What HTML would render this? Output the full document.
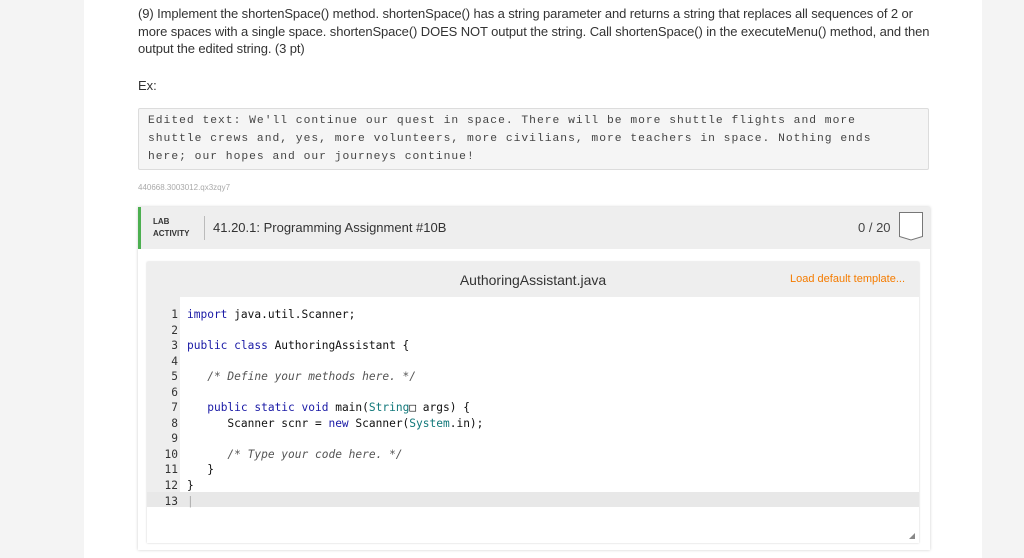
<!DOCTYPE html>
<html><head><style>
body{margin:0;width:1024px;height:558px;background:#f4f4f4;font-family:"Liberation Sans",sans-serif;overflow:hidden;position:relative}
.page{position:absolute;left:84px;top:0;width:898px;height:558px;background:#fff}
.p{position:absolute;left:138px;top:5px;width:795px;font-size:13px;line-height:17.5px;color:#333;letter-spacing:-0.1px}
.ex{position:absolute;left:138px;top:78px;font-size:13px;color:#333}
.pre{position:absolute;left:138px;top:108px;width:791px;height:62px;background:#f5f5f5;border:1px solid #dcdcdc;border-radius:2px;padding:0 0 0 9px;box-sizing:border-box;font-family:"Liberation Mono",monospace;font-size:11.3px;letter-spacing:1.0px;line-height:18px;color:#444;white-space:pre}
.pre div{padding-top:3px}
.id{position:absolute;left:138px;top:183px;font-size:8px;color:#aaa}
.lab{position:absolute;left:138px;top:207px;width:792px;height:343px;background:#fff;box-shadow:0 0 3px rgba(0,0,0,.2)}
.hdr{position:absolute;left:0;top:0;width:792px;height:42px;background:#eee;border-left:3px solid #4caf50;box-sizing:border-box}
.la{position:absolute;left:12px;top:9px;font-size:8px;font-weight:bold;color:#333;line-height:12px}
.sep{position:absolute;left:63px;top:9px;width:1px;height:24px;background:#bbb}
.tt{position:absolute;left:72px;top:13px;font-size:13px;color:#333}
.sc{position:absolute;left:717px;top:13px;font-size:13px;color:#444}
.ed{position:absolute;left:9px;top:55px;width:772px;height:281px;background:#fff;box-shadow:0 0 2px rgba(0,0,0,.2)}
.eh{position:absolute;left:0;top:0;width:772px;height:35px;background:#eee}
.fn{position:absolute;left:0;width:772px;top:10px;text-align:center;font-size:14px;color:#333}
.ld{position:absolute;right:14px;top:11px;font-size:11px;color:#f57c00}
.gut{position:absolute;left:0;top:35px;width:33px;height:210px;background:#eee}
.hl{position:absolute;left:0;top:230px;width:772px;height:15px;background:#e8e8e8}
.code{position:absolute;left:0;top:45px;font-family:"DejaVu Sans Mono",monospace;font-size:11.2px;line-height:15.55px;color:#111;white-space:pre}
.ln{display:inline-block;width:31px;text-align:right;color:#333;margin-right:9px}
.k{color:#1a1aa6}.t{color:#11787a}.c{color:#555;font-style:italic}
</style></head><body>
<div class="page"></div>
<div class="p">(9) Implement the shortenSpace() method. shortenSpace() has a string parameter and returns a string that replaces all sequences of 2 or more spaces with a single space. shortenSpace() DOES NOT output the string. Call shortenSpace() in the executeMenu() method, and then output the edited string. (3 pt)</div>
<div class="ex">Ex:</div>
<div class="pre"><div>Edited text: We'll continue our quest in space. There will be more shuttle flights and more
shuttle crews and, yes, more volunteers, more civilians, more teachers in space. Nothing ends
here; our hopes and our journeys continue!</div></div>
<div class="id">440668.3003012.qx3zqy7</div>
<div class="lab">
<div class="hdr"><div class="la">LAB<br>ACTIVITY</div><div class="sep"></div><div class="tt">41.20.1: Programming Assignment #10B</div><div class="sc">0 / 20</div>
<svg style="position:absolute;left:757px;top:4px" width="28" height="32"><path d="M1.5 1.5H24.5V25.5L13 29L1.5 25.5Z" fill="#fff" stroke="#777" stroke-width="1"/></svg></div>
<div class="ed">
<div class="eh"><div class="fn">AuthoringAssistant.java</div><div class="ld">Load default template...</div></div>
<div class="gut"></div><div class="hl"></div>
<div class="code"><span class="ln">1</span><span class="k">import</span> java.util.Scanner;
<span class="ln">2</span>
<span class="ln">3</span><span class="k">public class</span> AuthoringAssistant {
<span class="ln">4</span>
<span class="ln">5</span>   <span class="c">/* Define your methods here. */</span>
<span class="ln">6</span>
<span class="ln">7</span>   <span class="k">public static void</span> main(<span class="t">String</span>□ args) {
<span class="ln">8</span>      Scanner scnr = <span class="k">new</span> Scanner(<span class="t">System</span>.in);
<span class="ln">9</span>
<span class="ln">10</span>      <span class="c">/* Type your code here. */</span>
<span class="ln">11</span>   }
<span class="ln">12</span>}
<span class="ln">13</span><span style="color:#aaa">|</span></div>
<svg style="position:absolute;right:4px;bottom:4px" width="6" height="6"><path d="M6 0V6H0Z" fill="#888"/></svg>
</div>
</div>
</body></html>
